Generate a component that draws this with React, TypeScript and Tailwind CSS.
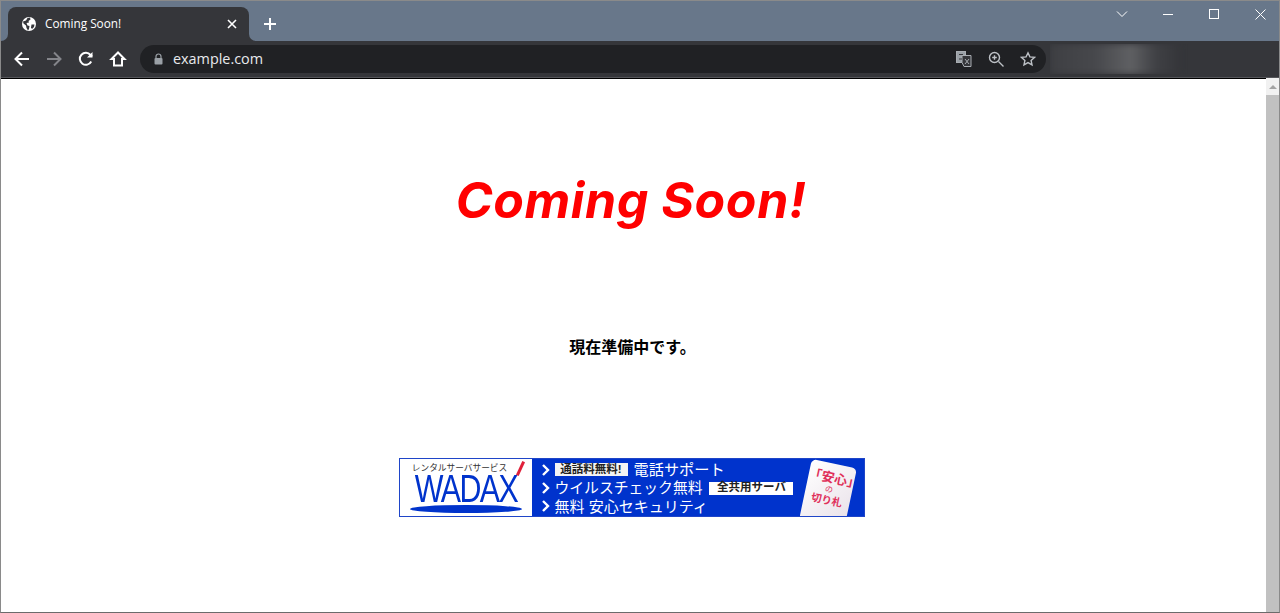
import React from 'react';

const jp = "font-['Liberation_Sans','Noto_Sans_CJK_JP',sans-serif]";

function Globe() {
  return (
    <svg width="16" height="16" viewBox="0 0 16 16">
      <circle cx="8" cy="8" r="7" fill="#fff" />
      <path d="M2 5.500 5 4.500 6.500 2 9 1.500 9.500 3.500 7.500 5 8 6.500 5.500 7 6.500 9.500 8.500 10 8 13 7 14.500 5.500 12 5 9.500 2.500 7.500Z" fill="#35363a" />
      <path d="M10.500 8.500h3l-.5 2.500-2 2-1-1.500Z" fill="#35363a" />
    </svg>
  );
}

function NavIcon({ d, color = '#fff' }: { d: string; color?: string }) {
  return (
    <svg width="20" height="20" viewBox="0 0 20 20" fill="none" stroke={color} strokeWidth="2" strokeLinejoin="miter">
      <path d={d} />
    </svg>
  );
}

function TabBar() {
  return (
    <div className="flex h-[40px] shrink-0 bg-[#68778a] pl-[7px] pt-[6px]">
      <div className="relative flex h-[34px] w-[241px] items-center rounded-t-[8px] bg-[#35363a] pl-[13px] pr-[12px]">
        <div className="absolute bottom-0 -left-[7px] h-[7px] w-[7px] bg-[#35363a]">
          <div className="h-full w-full rounded-br-[7px] bg-[#68778a]" />
        </div>
        <div className="absolute bottom-0 -right-[7px] h-[7px] w-[7px] bg-[#35363a]">
          <div className="h-full w-full rounded-bl-[7px] bg-[#68778a]" />
        </div>
        <Globe />
        <span className="ml-[8px] flex-1 text-[11.800px] text-white font-['Open_Sans',sans-serif]">Coming Soon!</span>
        <svg width="10" height="10" viewBox="0 0 10 10" stroke="#fff" strokeWidth="1.600">
          <path d="M1 1l8 8M9 1l-8 8" />
        </svg>
      </div>
      <div className="ml-[15px] flex h-[34px] items-center">
        <svg width="12" height="12" viewBox="0 0 12 12" stroke="#fff" strokeWidth="2">
          <path d="M6 0v12M0 6h12" />
        </svg>
      </div>
      <div className="ml-auto -mr-[4px] -mt-[6px] flex h-[26px] items-start">
        <div className="flex h-[26px] w-[46px] items-center justify-center">
          <svg width="12" height="8" viewBox="0 0 12 8" fill="none" stroke="#fff" strokeWidth="1">
            <path d="M1 1.500l5 5 5-5" />
          </svg>
        </div>
        <div className="flex h-[26px] w-[46px] items-center justify-center">
          <div className="h-px w-[10px] bg-white" />
        </div>
        <div className="flex h-[26px] w-[46px] items-center justify-center">
          <div className="h-[10px] w-[10px] border border-white" />
        </div>
        <div className="flex h-[26px] w-[46px] items-center justify-center">
          <svg width="11" height="11" viewBox="0 0 11 11" stroke="#fff" strokeWidth="1">
            <path d="M.5.5l10 10M10.500.5l-10 10" />
          </svg>
        </div>
      </div>
    </div>
  );
}

function Toolbar() {
  return (
    <div className="flex h-[36px] shrink-0 items-center bg-[#35363a] pl-[11px]">
      <div className="flex w-[128px] gap-[12px]">
        <NavIcon d="M17 10H4M10 3.500 3.500 10l6.500 6.500" />
        <NavIcon color="#84858a" d="M3 10h13M10 3.500l6.500 6.500-6.500 6.500" />
        <svg width="20" height="20" viewBox="0 0 20 20" fill="none" stroke="#fff" strokeWidth="2">
          <path d="M15.200 12.500A6 6 0 1 1 14.500 6L16 7.500" />
          <path d="M16.500 3v5.500H11" fill="#fff" stroke="none" />
        </svg>
        <NavIcon d="M10 3.500 3.500 10H6v6.500h8V10h2.500Z" />
      </div>
      <div className="flex h-[28px] w-[906px] items-center rounded-full bg-[#202124] pl-[14px] pr-[10px]">
        <svg width="9" height="12" viewBox="0 0 9 12" fill="none">
          <path d="M2 5V3.500a2.500 2.500 0 0 1 5 0V5" stroke="#9aa0a6" strokeWidth="1.200" />
          <rect x="0.500" y="5" width="8" height="6.500" rx="1" fill="#9aa0a6" />
        </svg>
        <span className="ml-[10px] flex-1 text-[14.400px] text-[#e8eaed] font-['Open_Sans',sans-serif]">example.com</span>
        <div className="flex items-center gap-[16px]">
          <svg width="16" height="16" viewBox="0 0 16 16" fill="none" stroke="#a9adb2" strokeWidth="1">
            <rect x="0.500" y="0.500" width="9" height="11" fill="#9aa0a6" />
            <path d="M6 4.500h9v11H8l-2-4Z" fill="#35363a" />
            <path d="M9 8l4 5M13 8l-4 5" />
            <path d="M3 3.500h4M3 8h3" stroke="#35363a" />
          </svg>
          <svg width="16" height="16" viewBox="0 0 16 16" fill="none" stroke="#bdc1c6" strokeWidth="1.400">
            <circle cx="6.500" cy="6.500" r="5" />
            <path d="M10.500 10.500l5 5M4.200 6.500h4.600M6.500 4.200v4.600" />
          </svg>
          <svg width="16" height="16" viewBox="0 0 16 16" fill="none" stroke="#bdc1c6" strokeWidth="1.400">
            <path d="M8 1.800l1.900 4.100 4.500.5-3.300 3 .9 4.500L8 11.600l-4 2.300.9-4.500-3.300-3 4.500-.5Z" />
          </svg>
        </div>
      </div>
      {/* blurred out profile area */}
      <div className="ml-[4px] h-[30px] w-[140px] overflow-hidden">
        <div className="h-[30px] w-[130px] bg-[linear-gradient(90deg,#3e3f43,#47484c_35%,#5f6063_62%,#3f4044_82%,#35363a)] blur-[3px]" />
      </div>
    </div>
  );
}

function Chevron() {
  return (
    <svg width="10" height="12" viewBox="0 0 10 12" fill="none" stroke="#fff" strokeWidth="2.400" className="shrink-0">
      <path d="M2 1l5 5-5 5" />
    </svg>
  );
}

function Banner() {
  return (
    <div className={`flex h-[59px] w-[466px] overflow-hidden border border-[#1f45c8] bg-[#0033cc] ${jp}`}>
      <div className="relative flex w-[132px] shrink-0 flex-col items-center bg-white text-[#0033cc]">
        <span className="mt-[4px] h-[10px] pr-[12px] text-[8.700px] leading-[10px] text-[#333]">レンタルサーバサービス</span>
        <span className="mt-[2px] h-[28px] scale-x-[0.8] text-[38px] leading-[28px] tracking-[-2px]">WADAX</span>
        <div className="mt-[2px] h-[8px] w-[112px] rounded-[50%] bg-[#0033cc]" />
        <div className="absolute left-[119px] top-[2px] h-[15px] w-[3px] rotate-[25deg] bg-[#e0203a]" />
      </div>
      <div className="relative flex flex-1 flex-col pl-[9px] pt-[1px] text-white">
        <div className="flex h-[19px] items-center gap-[4px]">
          <Chevron />
          <span className="flex h-[13px] w-[73px] items-center justify-center bg-[#f4f4f4] text-[11.500px] font-bold text-[#222]">通話料無料!</span>
          <span className="ml-[2px] text-[15.200px] leading-none">電話サポート</span>
        </div>
        <div className="flex h-[18px] items-center gap-[4px]">
          <Chevron />
          <span className="text-[14.800px] leading-none">ウイルスチェック無料</span>
          <span className="ml-[3px] flex h-[13px] w-[84px] items-center justify-center bg-white text-[11.500px] font-bold text-[#222]">全共用サーバ</span>
        </div>
        <div className="flex h-[18px] items-center gap-[4px]">
          <Chevron />
          <span className="text-[15px] leading-none">無料 安心セキュリティ</span>
        </div>
        <div className="absolute right-[13px] top-[4px] h-[62px] w-[46px] rotate-[12deg] rounded-[5px] bg-gradient-to-br from-white to-[#e8e0e8]">
          <div className="flex flex-col items-center pt-[7px] text-[#e0305a]">
            <span className="text-[13px] font-bold leading-[15px]">「安心」</span>
            <span className="text-[8px] leading-[9px]">の</span>
            <span className="text-[10.500px] font-bold leading-[12px]">切り札</span>
          </div>
        </div>
      </div>
    </div>
  );
}

function Scrollbar() {
  return (
    <div className="flex w-[13px] shrink-0 flex-col bg-[#f1f1f1]">
      <div className="flex h-[17px] shrink-0 items-center justify-center">
        <div className="h-0 w-0 border-x-[4px] border-b-[4px] border-x-transparent border-b-[#a3a3a3]" />
      </div>
      <div className="flex-1 bg-[#c1c1c1]" />
    </div>
  );
}

export default function App() {
  return (
    <div className="flex h-[613px] w-[1280px] flex-col overflow-hidden border border-[#8a8a8a] border-b-[#6b6b6b] bg-white">
      <TabBar />
      <Toolbar />
      <div className="h-px shrink-0 bg-[#55565a]" />
      <div className="flex min-h-0 flex-1">
        <main className="flex flex-1 flex-col items-center border-t border-black pt-[86px]">
          <h1 className="mr-[5px] h-[70px] text-[50px] font-bold italic leading-[70px] tracking-[0.6px] text-[#ff0000] font-['Inter',sans-serif]">Coming Soon!</h1>
          <p className="mr-[2px] mt-[99px] h-[24px] text-[16px] font-bold leading-[24px] text-black font-['Noto_Sans_CJK_JP',sans-serif]">現在準備中です。</p>
          <div className="mr-[4px] mt-[100px]">
            <Banner />
          </div>
        </main>
        <Scrollbar />
      </div>
    </div>
  );
}
